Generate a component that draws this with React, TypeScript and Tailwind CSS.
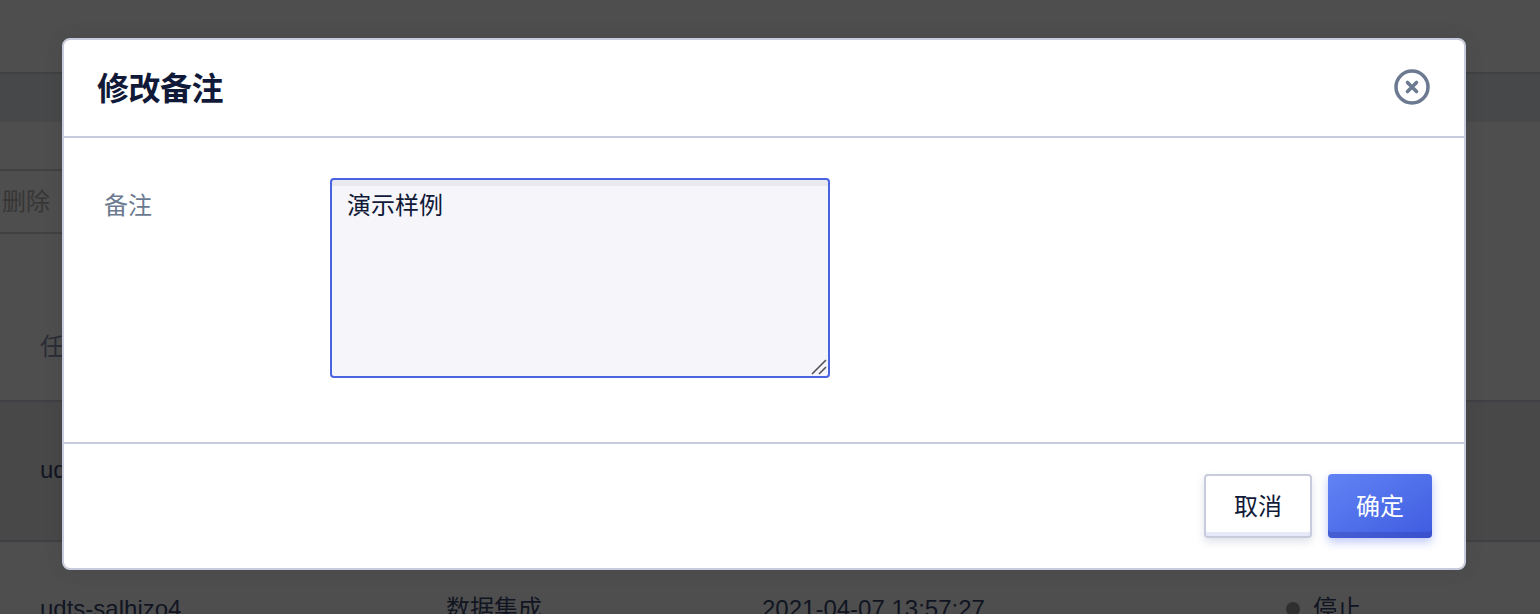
const font = "font-['Helvetica','Liberation_Sans','Noto_Sans_CJK_SC',sans-serif]";

const BackgroundPage = () => {
  return (
    <div className="h-full flex flex-col text-[24px] text-[#111522]">
      <div className="h-[72px] shrink-0" />
      <div className="h-[50px] shrink-0 bg-[#47484a] border-t-2 border-[#414144]" />
      <div className="h-[49px] shrink-0 w-[200px] border-b-2 border-[#414141]" />
      <div className="h-[63px] shrink-0 w-[200px] border-b-2 border-[#414141] flex items-center pl-[2px] text-[#363636]">
        <span className="leading-none">删除</span>
      </div>
      <div className="h-[168px] shrink-0 border-b-2 border-[#404044] flex items-center pl-10 pt-[60px] text-[#2a2c36]">
        <span>任务</span>
      </div>
      <div className="h-[140px] shrink-0 bg-[#484849] border-b-2 border-[#404044] flex items-center pl-10 pb-[2px]">
        <span>udts-salhizo4</span>
      </div>
      <div className="flex items-start pt-[49px] leading-[36px]">
        <span className="w-[446px] pl-10 shrink-0">udts-salhizo4</span>
        <span className="w-[316px] shrink-0">数据集成</span>
        <span className="w-[524px] shrink-0">2021-04-07 13:57:27</span>
        <span className="flex items-center gap-[13px]">
          <span className="w-[14px] h-[14px] rounded-full bg-[#2f2f2f]" />
          停止
        </span>
      </div>
    </div>
  );
};

const EditRemarkModal = () => {
  return (
    <div className="absolute left-[62px] top-[38px] w-[1404px] h-[532px] bg-white border-2 border-[#c8cbdb] rounded-lg flex flex-col shadow-[0_0_20px_rgba(0,0,0,0.08)]">
      <div className="h-[98px] shrink-0 border-b-2 border-[#c8cbdb] flex items-center justify-between pl-[33px] pr-[34px] pb-[2px]">
        <h2 className="text-[32px] font-semibold text-[#101a38] leading-none tracking-[-0.5px] pt-[3px]">修改备注</h2>
        <button type="button" className="block">
          <svg width="36" height="36" viewBox="0 0 36 36" fill="none" stroke="#6b7a90">
            <circle cx="18" cy="18" r="16" strokeWidth="3.5" />
            <path d="M13.5 13.5 L22.5 22.5 M22.5 13.5 L13.5 22.5" strokeWidth="3.6" strokeLinecap="round" />
          </svg>
        </button>
      </div>
      <div className="flex-1 flex items-start pt-[40px] pl-[40px]">
        <label className="w-[226px] shrink-0 text-[24px] leading-[56px] text-[#6b7a90]">备注</label>
        <div className="relative w-[500px] h-[200px]">
          <textarea
            defaultValue="演示样例"
            className="block w-full h-full resize-none bg-[#f5f5fa] border-2 border-[#4a63e0] rounded-[4px] shadow-[inset_0_6px_0_#e9e9ef] pl-[15px] pr-4 py-2 text-[24px] leading-[36px] text-[#101a38] outline-none"
          />
          <svg className="absolute right-[2px] bottom-[2px]" width="18" height="18" viewBox="0 0 18 18" stroke="#555" strokeWidth="1.6">
            <path d="M2 16 L16 2 M9 16 L16 9" />
          </svg>
        </div>
      </div>
      <div className="h-[126px] shrink-0 border-t-2 border-[#c8cbdb] flex items-start justify-end gap-4 pt-[30px] pr-[32px]">
        <button
          type="button"
          className="w-[108px] h-[64px] rounded-[4px] bg-white border-2 border-[#c8cbdb] shadow-[inset_0_-4px_0_#e6eaf8,0_4px_8px_rgba(100,110,150,0.2)] text-[24px] text-[#101a38] pt-[2px]"
        >
          取消
        </button>
        <button
          type="button"
          className="w-[104px] h-[64px] rounded-[4px] bg-gradient-to-br from-[#6183f4] to-[#3f5be0] shadow-[inset_0_-6px_0_rgba(50,60,170,0.35),0_4px_10px_rgba(70,95,230,0.35)] text-[24px] text-white pt-[2px]"
        >
          确定
        </button>
      </div>
    </div>
  );
};

export default function App() {
  return (
    <div className={`relative w-[1540px] h-[614px] overflow-hidden bg-[#4e4e4e] ${font}`}>
      <BackgroundPage />
      <EditRemarkModal />
    </div>
  );
}
